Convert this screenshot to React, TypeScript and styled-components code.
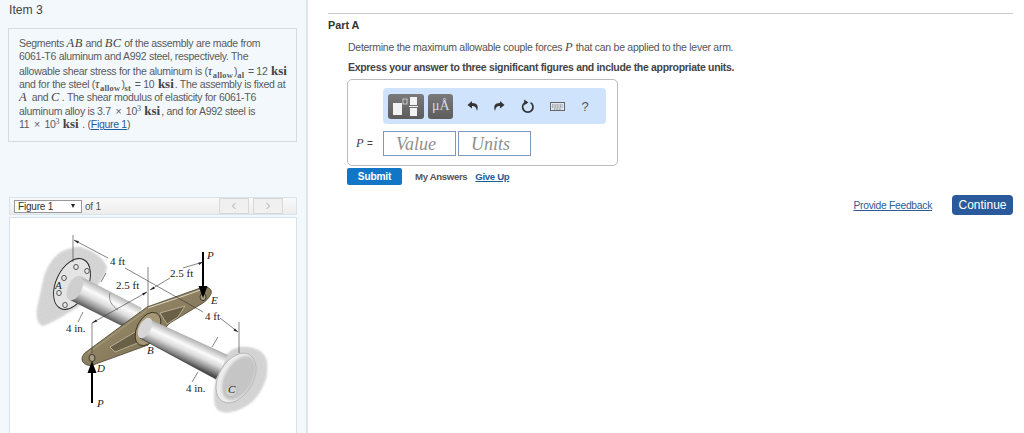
import React from "react";
import styled, { createGlobalStyle } from "styled-components";

const Global = createGlobalStyle`
  html, body { margin: 0; padding: 0; background: #fff; }
  body { font-family: "Liberation Sans", Arial, sans-serif; overflow: hidden; }
`;

const Page = styled.div`
  display: flex;
  width: 1024px;
  height: 433px;
  overflow: hidden;
`;

const Side = styled.aside`
  width: 308px;
  flex: none;
  box-sizing: border-box;
  height: 433px;
  background: #f3f8fd;
  border-right: 2px solid #dfe5ee;
  padding: 3px 9px 0 8px;
  overflow: hidden;
`;

const ItemTitle = styled.div`
  font-size: 12.2px;
  line-height: 15px;
  color: #444;
  margin-bottom: 10px;
  padding-left: 1px;
`;

const Statement = styled.div`
  box-sizing: border-box;
  height: 114px;
  border: 1px solid #d5dbe0;
  padding: 8px 10px 0;
  font-size: 10.5px;
  letter-spacing: -0.3px;
  color: #5a5a5a;
  background: #f3f8fd;
`;

const Line = styled.div`
  height: 13.4px;
  line-height: 13.4px;
  white-space: nowrap;
`;

const M = styled.span`
  font-family: "Liberation Serif", serif;
  font-style: italic;
  font-size: 12.5px;
  letter-spacing: 0.5px;
  color: #444;
`;

const WideM = styled(M)`
  letter-spacing: 1.5px;
  margin-right: 1px;
`;

const Unit = styled.span`
  font-family: "Liberation Serif", serif;
  font-weight: bold;
  font-size: 13px;
  letter-spacing: 0;
  margin: 0 1px;
  color: #444;
`;

const Op = styled.span`
  margin: 0 2px;
`;

const Sub = styled.sub`
  font-family: "Liberation Serif", serif;
  font-size: 8.5px;
  line-height: 0;
  font-weight: bold;
  letter-spacing: 0.2px;
  margin-right: 1px;
`;

const Sup = styled.sup`
  font-family: "Liberation Serif", serif;
  font-size: 8px;
  line-height: 0;
`;

const BlueLink = styled.a`
  color: #1f5c99;
  text-decoration: underline;
`;

const FigureBar = styled.div`
  box-sizing: border-box;
  margin-top: 55px;
  margin-left: 1px;
  height: 18px;
  display: flex;
  align-items: center;
  padding: 0 13px 0 4px;
  background: linear-gradient(#fafafa, #ececec);
  border: 1px solid #dbe3ea;
  font-size: 10px;
  letter-spacing: -0.2px;
  color: #555;
`;

const FigureSelect = styled.div`
  box-sizing: border-box;
  width: 68px;
  height: 13px;
  display: flex;
  justify-content: space-between;
  align-items: center;
  padding: 0 2px 0 3px;
  background: #fff;
  border: 1px solid #999;
  color: #333;
  margin-right: 3px;
`;

const Caret = styled.span`
  width: 0;
  height: 0;
  border-left: 2.5px solid transparent;
  border-right: 2.5px solid transparent;
  border-top: 4px solid #222;
  margin-right: 4px;
`;

const Pager = styled.div`
  margin-left: auto;
  display: flex;
  gap: 4px;
`;

const PagerButton = styled.div`
  box-sizing: border-box;
  width: 30px;
  height: 16px;
  display: flex;
  justify-content: center;
  align-items: center;
  background: #f0f0f0;
  border: 1px solid #d8d8d8;
`;

const FigurePanel = styled.div`
  box-sizing: border-box;
  margin: 2px 0 0 1px;
  height: 216px;
  background: #fff;
  border: 1px solid #d5e2ee;
  border-bottom: 0;
`;

const Main = styled.main`
  flex: 1;
  padding: 13px 11px 0 20px;
  min-width: 0;
`;

const Rule = styled.div`
  height: 1px;
  background: #ccc;
`;

const PartTitle = styled.div`
  font-size: 10.8px;
  line-height: 13px;
  font-weight: bold;
  color: #333;
  margin-top: 5px;
`;

const Body = styled.div`
  padding-left: 19px;
`;

const Prompt = styled.div`
  font-size: 10.5px;
  letter-spacing: -0.27px;
  line-height: 14px;
  color: #555;
  margin: 8px 0 0 1px;
  white-space: nowrap;
`;

const Instruction = styled(Prompt)`
  font-weight: bold;
  letter-spacing: -0.31px;
  color: #444;
  margin-top: 6px;
`;

const AnswerBox = styled.div`
  box-sizing: border-box;
  width: 271px;
  height: 87px;
  margin-top: 5px;
  border: 1px solid #bbb;
  border-radius: 5px;
  padding: 8px 11px 0 35px;
  background: #fff;
`;

const Toolbar = styled.div`
  box-sizing: border-box;
  width: 223px;
  height: 36px;
  display: flex;
  align-items: center;
  padding: 0 5px;
  background: #cfe4fc;
  border-radius: 4px;
`;

const TemplateButton = styled.div<{ $w: number }>`
  box-sizing: border-box;
  width: ${(p) => p.$w}px;
  height: 25px;
  margin-right: 4px;
  display: flex;
  justify-content: center;
  align-items: center;
  background: linear-gradient(#7a7a7a, #5c5c5c);
  border-radius: 3px;
  color: #d9d9d9;
  font-family: "Liberation Serif", serif;
  font-size: 14px;
`;

const ToolIcon = styled.div<{ $w: number }>`
  width: ${(p) => p.$w}px;
  height: 25px;
  display: flex;
  justify-content: center;
  align-items: center;
  color: #555;
  font-size: 13px;
`;

const InputRow = styled.div`
  display: flex;
  align-items: center;
  margin: 7px 0 0 -27px;
`;

const VarLabel = styled.div`
  width: 27px;
  font-size: 10px;
  color: #444;
`;

const Field = styled.div<{ $w: number }>`
  box-sizing: border-box;
  width: ${(p) => p.$w}px;
  height: 25px;
  line-height: 24px;
  margin-right: 2px;
  padding-left: 12px;
  border: 1px solid #7d97bd;
  font-family: "Liberation Serif", serif;
  font-style: italic;
  font-size: 18px;
  color: #8f8f8f;
`;

const ActionRow = styled.div`
  display: flex;
  align-items: center;
  height: 17px;
  margin-top: 2px;
  font-size: 9.6px;
  letter-spacing: -0.33px;
  font-weight: bold;
`;

const SubmitButton = styled.div`
  width: 55px;
  height: 17px;
  line-height: 17px;
  text-align: center;
  background: #1276c6;
  border-radius: 2px;
  color: #fff;
  font-size: 10.2px;
  letter-spacing: -0.2px;
  margin-right: 13px;
`;

const Muted = styled.span`
  color: #555;
  margin-right: 8px;
`;

const FooterRow = styled.div`
  display: flex;
  justify-content: flex-end;
  align-items: center;
  margin-top: 10px;
  height: 20px;
`;

const Feedback = styled.a`
  font-size: 10.3px;
  letter-spacing: -0.28px;
  color: #2f5c94;
  text-decoration: underline;
  margin-right: 20px;
`;

const ContinueButton = styled.div`
  width: 61px;
  height: 20px;
  line-height: 20px;
  text-align: center;
  background: #2a5a9b;
  border-radius: 4px;
  color: #fff;
  font-size: 12px;
`;

const shaftStops = (
  <>
    <stop offset="0" stopColor="#5f5f5f" />
    <stop offset="0.1" stopColor="#a8a8a8" />
    <stop offset="0.42" stopColor="#fbfbfb" />
    <stop offset="0.62" stopColor="#dcdcdc" />
    <stop offset="0.85" stopColor="#8a8a8a" />
    <stop offset="1" stopColor="#4a4a4a" />
  </>
);

const Label = ({ x, y, i, children }: { x: number; y: number; i?: boolean; children: React.ReactNode }) => (
  <text
    x={x}
    y={y}
    fontFamily="Liberation Serif, serif"
    fontSize={11}
    fontStyle={i ? "italic" : "normal"}
    fill="#222"
  >
    {children}
  </text>
);

const Figure = () => (
  <svg width="286" height="216" viewBox="10 218 286 216" aria-label="Assembly figure">
    <defs>
      <linearGradient id="rear" gradientUnits="userSpaceOnUse" x1="86" y1="274" x2="72" y2="302">{shaftStops}</linearGradient>
      <linearGradient id="front" gradientUnits="userSpaceOnUse" x1="152" y1="316" x2="140" y2="342">{shaftStops}</linearGradient>
      <linearGradient id="plate" x1="0" y1="0" x2="1" y2="1">
        <stop offset="0" stopColor="#a5956f" />
        <stop offset="0.5" stopColor="#8b7f60" />
        <stop offset="1" stopColor="#75694c" />
      </linearGradient>
      <filter id="grain" x="-5%" y="-5%" width="110%" height="110%">
        <feTurbulence type="fractalNoise" baseFrequency="0.9" numOctaves="2" seed="4" result="n" />
        <feColorMatrix in="n" type="matrix" values="0 0 0 0 0.6  0 0 0 0 0.6  0 0 0 0 0.6  0 0 0 1.1 -0.35" result="d" />
        <feComposite in="d" in2="SourceAlpha" operator="in" result="dots" />
        <feGaussianBlur in="SourceGraphic" stdDeviation="1" result="soft" />
        <feMerge>
          <feMergeNode in="soft" />
          <feMergeNode in="dots" />
        </feMerge>
      </filter>
    </defs>

    <path d="M80 247 C92 250 104 258 107 267 C106 274 102 278 100 282 C92 292 86 300 78 307 C66 314 54 322 43 326 C37 324 36 316 37 308 C40 296 42 284 45 273 C50 262 56 254 63 251 C68 249 74 247 80 247 Z" fill="#d6d6d6" filter="url(#grain)" />
    <path d="M240 347 C252 346 265 350 267 362 C269 378 262 392 252 402 C242 410 226 416 218 410 C212 404 214 392 216 378 C220 362 226 350 240 347 Z" fill="#d6d6d6" filter="url(#grain)" />

    <ellipse cx="72" cy="284" rx="16" ry="27" transform="rotate(25 72 284)" fill="#e4e4e4" stroke="#222" strokeWidth="0.9" />
    {[[76, 267], [87, 271], [64, 278], [59, 293], [65, 305]].map(([cx, cy]) => (
      <ellipse key={cx + "-" + cy} cx={cx} cy={cy} rx="2.3" ry="2.6" fill="#e8e8e8" stroke="#333" strokeWidth="0.8" />
    ))}

    <path d="M80 276 L142 308 L130 330 L70 300 Z" fill="url(#rear)" />
    <ellipse cx="75" cy="288" rx="7" ry="13" transform="rotate(25 75 288)" fill="#cfcfcf" />
    <path d="M110 293 C108 300 112 306 118 310" fill="none" stroke="#555" strokeWidth="0.6" />

    <path d="M82 358 C83 355 84 353 86 352 L147 307 L203 287 C208 286 213 290 211 294 C209 298 206 301 203 303 L170 323 L148 345 L93 365 C88 367 81 363 82 358 Z" fill="url(#plate)" stroke="#3b3527" strokeWidth="0.7" />
    <path d="M110 347 L135 332 L140 342 L115 352 Z" fill="#6a6048" stroke="#cfc7ac" strokeWidth="0.7" />
    <path d="M160 313 L185 306 L178 317 L167 324 Z" fill="#6a6048" stroke="#cfc7ac" strokeWidth="0.7" />
    <path d="M148 308 C165 302 185 296 203 289" fill="none" stroke="#e7e0c8" strokeWidth="0.9" />
    <path d="M88 353 L147 310" fill="none" stroke="#bdb291" strokeWidth="0.6" />
    <ellipse cx="92" cy="358" rx="3" ry="3.6" fill="#a89e80" stroke="#222" strokeWidth="0.8" />
    <ellipse cx="203" cy="297" rx="3" ry="3.6" fill="#a89e80" stroke="#222" strokeWidth="0.8" />

    <ellipse cx="148" cy="329" rx="11" ry="18" transform="rotate(28 148 329)" fill="#a59775" stroke="#2d281c" strokeWidth="0.8" />
    <path d="M147 318 L228 355 L216 379 L140 338 Z" fill="url(#front)" />
    <path d="M140 338 L216 379" stroke="#333" strokeWidth="0.7" />
    <ellipse cx="145" cy="328" rx="6" ry="11" transform="rotate(28 145 328)" fill="#d7d7d7" />

    <ellipse cx="236" cy="378" rx="17" ry="27" transform="rotate(30 236 378)" fill="#ececec" stroke="#aaa" strokeWidth="0.7" />
    <ellipse cx="239" cy="378" rx="14" ry="24" transform="rotate(30 239 378)" fill="#c4c4c4" filter="url(#grain)" />
    <ellipse cx="231" cy="391" rx="6" ry="5.5" fill="#d2d2d2" stroke="#aaa" strokeWidth="0.5" />

    <g fill="none" stroke="#333" strokeWidth="0.6">
      <path d="M73 235 V262 M92 323 V353 M148 267 V307 M239 322 V353" />
      <path d="M74 240 L108 258 M125 268 L203 312 M220 318 L238 332" />
      <path d="M92 323 L147 292 M150 290 L170 278 M183 268 L203 262" />
      <path d="M78 322 L83 312 M101 282 L106 273 M212 347 L218 337 M192 382 L198 372" />
    </g>
    <g fill="#222">
      <path d="M74 240 l5 1.2 -1.2 2.2 Z M238 332 l-4.6 -1.4 1.5 -2 Z M92 323 l4 -3.6 1.2 2.2 Z M147 292 l-4.8 1.2 1.2 2.2 Z M150 290 l4.8 -1.2 -1.2 -2.2 Z M203 262 l-4.8 .8 1 2.2 Z" />
    </g>

    <path d="M203 252 V288" stroke="#000" strokeWidth="2" />
    <path d="M198.5 286 L207.5 286 L203 298 Z" fill="#000" />
    <path d="M92 403 V371" stroke="#000" strokeWidth="2" />
    <path d="M87.5 373 L96.5 373 L92 361 Z" fill="#000" />

    <Label x={110} y={265}>4 ft</Label>
    <Label x={205} y={320}>4 ft</Label>
    <Label x={116} y={289}>2.5 ft</Label>
    <Label x={170} y={277}>2.5 ft</Label>
    <Label x={66} y={332}>4 in.</Label>
    <Label x={186} y={392}>4 in.</Label>
    <Label x={55} y={289} i>A</Label>
    <Label x={147} y={354} i>B</Label>
    <Label x={228} y={393} i>C</Label>
    <Label x={97} y={372} i>D</Label>
    <Label x={211} y={304} i>E</Label>
    <Label x={207} y={259} i>P</Label>
    <Label x={97} y={407} i>P</Label>
  </svg>
);

const TemplateIcon = () => (
  <svg width="30" height="21" viewBox="0 0 30 21">
    <rect x="2" y="7" width="9" height="12" fill="#f2f2f2" />
    <rect x="12" y="3" width="4" height="5" fill="none" stroke="#ddd" strokeWidth="0.8" />
    <rect x="19" y="1" width="7" height="8" fill="#f2f2f2" />
    <rect x="18" y="10" width="9" height="1" fill="#f2f2f2" />
    <rect x="19" y="12" width="7" height="8" fill="#f2f2f2" />
  </svg>
);

const UndoIcon = ({ flip }: { flip?: boolean }) => (
  <svg width="12" height="12" viewBox="0 0 12 11" style={flip ? { transform: "scaleX(-1)" } : undefined}>
    <path d="M5 0.5 L0.5 4.5 L5 8 V5.6 C7.6 5.4 9.2 6.6 10 10.5 C11.8 6 10.4 2.6 5 2.6 Z" fill="#333" />
  </svg>
);

const ResetIcon = () => (
  <svg width="14" height="15" viewBox="0 0 14 15">
    <path d="M9.6 3.6 A5.2 5.2 0 1 1 4 3.6" fill="none" stroke="#333" strokeWidth="1.7" />
    <path d="M3.2 0.6 L7.4 3.4 L3.2 6.2 Z" fill="#333" />
  </svg>
);

const KeyboardIcon = () => (
  <svg width="15" height="9" viewBox="0 0 15 9">
    <rect x="0.5" y="0.5" width="14" height="8" fill="#dfe6f0" stroke="#666" />
    <path d="M2 3 H13 M2 5 H13 M4 7 H11" stroke="#777" strokeWidth="1" strokeDasharray="1 .6" />
  </svg>
);

export default function App() {
  return (
    <Page>
      <Global />
      <Side>
        <ItemTitle>Item 3</ItemTitle>
        <Statement>
          <Line>Segments <M>AB</M> and <M>BC</M> of the assembly are made from</Line>
          <Line>6061-T6 aluminum and A992 steel, respectively. The</Line>
          <Line>allowable shear stress for the aluminum is (<M>τ</M><Sub>allow</Sub>)<Sub>al</Sub> = 12 <Unit>ksi</Unit></Line>
          <Line>and for the steel (<M>τ</M><Sub>allow</Sub>)<Sub>st</Sub> = 10 <Unit>ksi</Unit>. The assembly is fixed at</Line>
          <Line><WideM>A</WideM> and <WideM>C</WideM>. The shear modulus of elasticity for 6061-T6</Line>
          <Line>aluminum alloy is 3.7 <Op>×</Op> 10<Sup>3</Sup> <Unit>ksi</Unit>, and for A992 steel is</Line>
          <Line>11 <Op>×</Op> 10<Sup>3</Sup> <Unit>ksi</Unit> . (<BlueLink>Figure 1</BlueLink>)</Line>
        </Statement>
        <FigureBar>
          <FigureSelect>Figure 1<Caret /></FigureSelect>
          of 1
          <Pager>
            <PagerButton>
              <svg width="6" height="8" viewBox="0 0 6 8"><path d="M4.5 1 L1.5 4 L4.5 7" fill="none" stroke="#aaa" /></svg>
            </PagerButton>
            <PagerButton>
              <svg width="6" height="8" viewBox="0 0 6 8"><path d="M1.5 1 L4.5 4 L1.5 7" fill="none" stroke="#aaa" /></svg>
            </PagerButton>
          </Pager>
        </FigureBar>
        <FigurePanel>
          <Figure />
        </FigurePanel>
      </Side>
      <Main>
        <Rule />
        <PartTitle>Part A</PartTitle>
        <Body>
          <Prompt>Determine the maximum allowable couple forces <M>P</M> that can be applied to the lever arm.</Prompt>
          <Instruction>Express your answer to three significant figures and include the appropriate units.</Instruction>
          <AnswerBox>
            <Toolbar>
              <TemplateButton $w={37}><TemplateIcon /></TemplateButton>
              <TemplateButton $w={25}>μÅ</TemplateButton>
              <ToolIcon $w={32}><UndoIcon /></ToolIcon>
              <ToolIcon $w={22}><UndoIcon flip /></ToolIcon>
              <ToolIcon $w={36}><ResetIcon /></ToolIcon>
              <ToolIcon $w={24}><KeyboardIcon /></ToolIcon>
              <ToolIcon $w={32}>?</ToolIcon>
            </Toolbar>
            <InputRow>
              <VarLabel><M>P</M> =</VarLabel>
              <Field $w={73}>Value</Field>
              <Field $w={73}>Units</Field>
            </InputRow>
          </AnswerBox>
          <ActionRow>
            <SubmitButton>Submit</SubmitButton>
            <Muted>My Answers</Muted>
            <BlueLink>Give Up</BlueLink>
          </ActionRow>
        </Body>
        <FooterRow>
          <Feedback>Provide Feedback</Feedback>
          <ContinueButton>Continue</ContinueButton>
        </FooterRow>
      </Main>
    </Page>
  );
}
